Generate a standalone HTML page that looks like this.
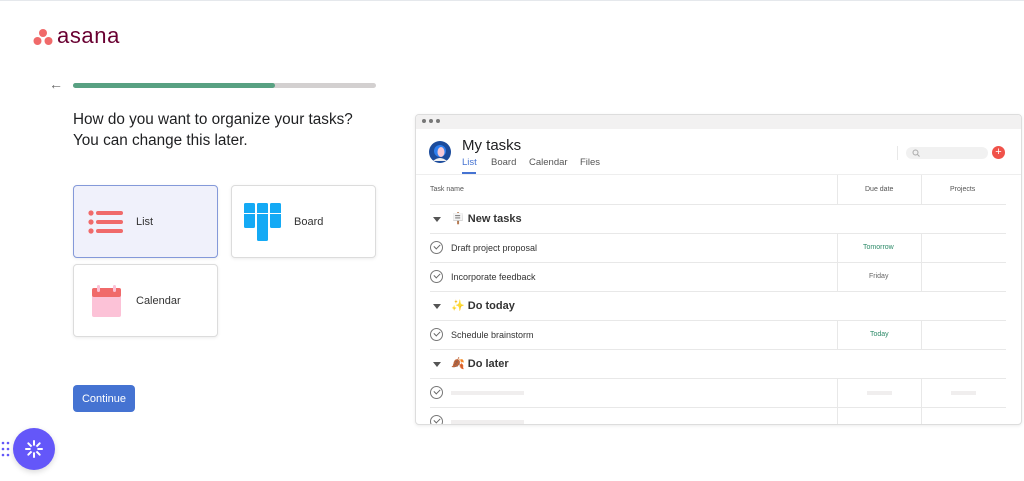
<!DOCTYPE html>
<html><head><meta charset="utf-8"><style>
*{margin:0;padding:0;box-sizing:border-box}
body{width:1024px;height:481px;background:#fff;font-family:"Liberation Sans","DejaVu Sans",sans-serif;position:relative;overflow:hidden;color:#1e1f21}
.a{position:absolute}
.card{position:absolute;width:145px;height:73px;border:1px solid #dcdcdc;border-radius:4px;background:#fff;box-shadow:0 1px 3px rgba(0,0,0,.08)}
.card span{position:absolute;left:62px;top:30px;font-size:11px;color:#333}
.row{position:absolute;left:430px;width:576px;height:29px;border-bottom:1px solid #e8e8e8;font-size:9px;color:#333}
.chk{position:absolute;left:0;top:7px;width:13px;height:13px;border:1px solid #777;border-radius:50%;}
.chk:after{content:"";position:absolute;left:3px;top:2px;width:5px;height:3px;border-left:1px solid #666;border-bottom:1px solid #666;transform:rotate(-45deg)}
.vl{position:absolute;top:0;bottom:-1px;width:1px;background:#e8e8e8}
.sec{position:absolute;left:430px;width:576px;height:29px;border-bottom:1px solid #e8e8e8;font-size:11px;font-weight:bold;color:#333}
.tri{position:absolute;left:3px;top:12px;border-left:4px solid transparent;border-right:4px solid transparent;border-top:5px solid #555}
</style></head><body>
<div class="a" style="left:0;top:0;width:1024px;height:1px;background:#e5e8ec"></div>
<svg class="a" style="left:33px;top:28px" width="20" height="18"><circle cx="10" cy="5" r="4" fill="#f06a6a"/><circle cx="4.5" cy="13" r="4" fill="#f06a6a"/><circle cx="15.5" cy="13" r="4" fill="#f06a6a"/></svg>
<div class="a" style="left:57px;top:23px;font-size:22px;color:#690031;letter-spacing:0.6px">asana</div>
<div class="a" style="left:49px;top:76px;font-size:14px;color:#666">←</div>
<div class="a" style="left:73px;top:83px;width:303px;height:5px;border-radius:3px;background:#d3d0d0"></div>
<div class="a" style="left:73px;top:83px;width:202px;height:5px;border-radius:3px;background:#58a182"></div>
<div class="a" style="left:73px;top:109px;font-size:15.3px;line-height:21px;color:#1e1f21">How do you want to organize your tasks?<br>You can change this later.</div>
<div class="card" style="left:73px;top:185px;background:#f0f1fb;border-color:#8499d9"><svg class="a" style="left:14px;top:24px" width="36" height="24"><g fill="#f06a6a"><circle cx="3" cy="3" r="2.6"/><circle cx="3" cy="12" r="2.6"/><circle cx="3" cy="21" r="2.6"/><rect x="8" y="1" width="27" height="4" rx="2"/><rect x="8" y="10" width="27" height="4" rx="2"/><rect x="8" y="19" width="27" height="4" rx="2"/></g></svg><span>List</span></div>
<div class="card" style="left:231px;top:185px"><svg class="a" style="left:11px;top:16px" width="40" height="40"><g fill="#14aaf5"><rect x="1" y="1" width="11" height="25" rx="1.5"/><rect x="14" y="1" width="11" height="38" rx="1.5"/><rect x="27" y="1" width="11" height="25" rx="1.5"/></g><rect x="1" y="11" width="37" height="1" fill="#fff"/></svg><span>Board</span></div>
<div class="card" style="left:73px;top:264px"><svg class="a" style="left:17px;top:18px" width="32" height="36"><rect x="1" y="5" width="29" height="29" rx="2" fill="#fcc2d7"/><rect x="1" y="5" width="29" height="9" rx="2" fill="#f06a6a"/><rect x="6" y="2" width="3" height="7" rx="1.5" fill="#fcc2d7"/><rect x="22" y="2" width="3" height="7" rx="1.5" fill="#fcc2d7"/></svg><span>Calendar</span></div>
<div class="a" style="left:73px;top:385px;width:62px;height:27px;background:#4573d2;border-radius:4px;color:#fff;font-size:11px;text-align:center;line-height:28px">Continue</div>
<svg class="a" style="left:1px;top:441px" width="9" height="16"><g fill="#6457f9"><circle cx="2" cy="2" r="1.3"/><circle cx="7" cy="2" r="1.3"/><circle cx="2" cy="8" r="1.3"/><circle cx="7" cy="8" r="1.3"/><circle cx="2" cy="14" r="1.3"/><circle cx="7" cy="14" r="1.3"/></g></svg>
<div class="a" style="left:13px;top:428px;width:42px;height:42px;border-radius:50%;background:#6457f9;box-shadow:0 2px 6px rgba(0,0,0,.15)"></div>
<svg class="a" style="left:24px;top:439px" width="20" height="20"><g stroke="#fff" stroke-width="2" stroke-linecap="round"><line x1="10" y1="2" x2="10" y2="18"/><line x1="2" y1="10" x2="18" y2="10"/><line x1="4.3" y1="4.3" x2="15.7" y2="15.7"/><line x1="15.7" y1="4.3" x2="4.3" y2="15.7"/></g><circle cx="10" cy="10" r="3.5" fill="#6457f9"/></svg>

<div class="a" style="left:415px;top:114px;width:607px;height:311px;border:1px solid #ddd;border-radius:4px;background:#fff;box-shadow:0 1px 3px rgba(0,0,0,.08);overflow:hidden">
 <div class="a" style="left:0;top:0;width:607px;height:14px;background:#f2f1f1"></div>
</div>
<svg class="a" style="left:421px;top:117px" width="26" height="8"><g fill="#777"><circle cx="3" cy="4" r="2"/><circle cx="10" cy="4" r="2"/><circle cx="17" cy="4" r="2"/></g></svg>
<svg class="a" style="left:429px;top:141px" width="22" height="22"><circle cx="11" cy="11" r="11" fill="#1b4b9c"/><circle cx="11" cy="10" r="6" fill="#2d7ff0"/><ellipse cx="12" cy="11" rx="3.5" ry="5" fill="#f6c9d6"/><path d="M4 20 Q11 14 18 20 Z" fill="#f0f0f0"/></svg>
<div class="a" style="left:462px;top:137px;font-size:15px;color:#1e1f21">My tasks</div>
<div class="a" style="left:462px;top:157px;font-size:9.5px;color:#555;color:#4573d2">List</div>
<div class="a" style="left:491px;top:157px;font-size:9.5px;color:#555">Board</div>
<div class="a" style="left:529px;top:157px;font-size:9.5px;color:#555">Calendar</div>
<div class="a" style="left:580px;top:157px;font-size:9.5px;color:#555">Files</div>
<div class="a" style="left:462px;top:172px;width:14px;height:2px;background:#4573d2"></div>
<div class="a" style="left:897px;top:146px;width:1px;height:14px;background:#e8e8e8"></div>
<div class="a" style="left:906px;top:147px;width:82px;height:12px;border-radius:6px;background:#f1f1f1"></div>
<svg class="a" style="left:912px;top:149px" width="8" height="8"><circle cx="3.5" cy="3.5" r="2.5" fill="none" stroke="#aaa" stroke-width="1"/><line x1="5.5" y1="5.5" x2="7.5" y2="7.5" stroke="#aaa"/></svg>
<div class="a" style="left:992px;top:146px;width:13px;height:13px;border-radius:50%;background:#f0524a;color:#fff;font-size:11px;line-height:12px;text-align:center">+</div>
<div class="a" style="left:416px;top:174px;width:605px;height:1px;background:#eee"></div>
<div class="row" style="top:175px;height:30px;font-size:7px;color:#555"><span class="a" style="left:0;top:11px">Task name</span><div class="vl" style="left:407px"></div><div class="vl" style="left:491px"></div><span class="a" style="left:435px;top:11px">Due date</span><span class="a" style="left:520px;top:11px">Projects</span></div>
<div class="sec" style="top:205px"><div class="tri"></div><span class="a" style="left:21px;top:7px">🪧 New tasks</span></div>
<div class="row" style="top:234px"><div class="chk"></div><span class="a" style="left:21px;top:9px">Draft project proposal</span><div class="vl" style="left:407px"></div><div class="vl" style="left:491px"></div><span class="a" style="left:433px;top:10px;font-size:7px;color:#2c8a68">Tomorrow</span></div>
<div class="row" style="top:263px"><div class="chk"></div><span class="a" style="left:21px;top:9px">Incorporate feedback</span><div class="vl" style="left:407px"></div><div class="vl" style="left:491px"></div><span class="a" style="left:439px;top:10px;font-size:7px;color:#666">Friday</span></div>
<div class="sec" style="top:292px"><div class="tri"></div><span class="a" style="left:21px;top:7px">✨ Do today</span></div>
<div class="row" style="top:321px"><div class="chk"></div><span class="a" style="left:21px;top:9px">Schedule brainstorm</span><div class="vl" style="left:407px"></div><div class="vl" style="left:491px"></div><span class="a" style="left:440px;top:10px;font-size:7px;color:#2c8a68">Today</span></div>
<div class="sec" style="top:350px"><div class="tri"></div><span class="a" style="left:21px;top:7px">🍂 Do later</span></div>
<div class="row" style="top:379px"><div class="chk"></div><div class="a" style="left:21px;top:12px;width:73px;height:4px;background:#f0eeee"></div><div class="vl" style="left:407px"></div><div class="vl" style="left:491px"></div><div class="a" style="left:437px;top:12px;width:25px;height:4px;background:#f0eeee"></div><div class="a" style="left:521px;top:12px;width:25px;height:4px;background:#f0eeee"></div></div>
<div class="row" style="top:408px;height:16px;border:none;overflow:hidden"><div class="chk"></div><div class="a" style="left:21px;top:12px;width:73px;height:4px;background:#f0eeee"></div><div class="vl" style="left:407px"></div><div class="vl" style="left:491px"></div></div>
</body></html>
